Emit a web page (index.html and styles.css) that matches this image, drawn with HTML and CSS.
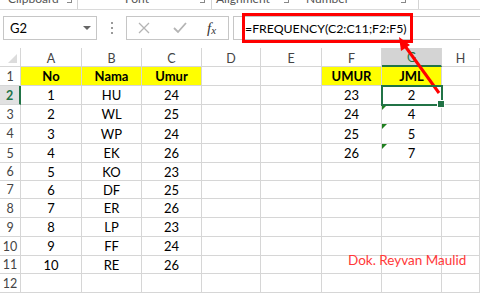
FILE: index.html
```html
<!DOCTYPE html>
<html>
<head>
<meta charset="utf-8">
<link rel="stylesheet" href="styles.css">
</head>
<body>
<div class="page">
  <div class="ribbon">
    <div class="grp g1"><span class="glabel">Clipboard</span><span class="launch"></span></div>
    <div class="grp g2"><span class="glabel">Font</span><span class="launch"></span></div>
    <div class="grp g3"><span class="glabel">Alignment</span><span class="launch"></span></div>
    <div class="grp g4"><span class="glabel">Number</span><span class="launch"></span></div>
  </div>
  <div class="fbar">
    <div class="namebox"><span>G2</span><span class="ddarrow"></span></div>
    <div class="dots"><i></i><i></i><i></i></div>
    <div class="btns">
      <span class="btn x">
        <svg width="12" height="12" viewBox="0 0 12 12"><path d="M1 1L11 11M11 1L1 11" stroke="#b4b4b4" stroke-width="1.3" fill="none"/></svg>
      </span>
      <span class="btn ok">
        <svg width="14" height="12" viewBox="0 0 14 12"><path d="M1 6L5 10L13 1" stroke="#b4b4b4" stroke-width="1.8" fill="none"/></svg>
      </span>
      <span class="btn fx"><i>f</i><i class="sub">x</i></span>
    </div>
    <div class="finput">
      <span class="ftext">=FREQUENCY(C2:C11;F2:F5)</span>
      <div class="redbox"></div>
    </div>
  </div>
  <div class="sheet">
    <div class="corner"><span class="tri"></span></div>
    <div class="ch">A</div><div class="ch">B</div><div class="ch">C</div><div class="ch">D</div><div class="ch">E</div><div class="ch">F</div><div class="ch sel">G</div><div class="ch">H</div>

    <div class="rh">1</div><div class="c y b">No</div><div class="c y b">Nama</div><div class="c y b">Umur</div><div class="c"></div><div class="c"></div><div class="c y b">UMUR</div><div class="c y b">JML</div><div class="c"></div>
    <div class="rh sel">2</div><div class="c">1</div><div class="c">HU</div><div class="c">24</div><div class="c"></div><div class="c"></div><div class="c">23</div><div class="c active">2</div><div class="c"></div>
    <div class="rh">3</div><div class="c">2</div><div class="c">WL</div><div class="c">25</div><div class="c"></div><div class="c"></div><div class="c">24</div><div class="c err">4</div><div class="c"></div>
    <div class="rh">4</div><div class="c">3</div><div class="c">WP</div><div class="c">24</div><div class="c"></div><div class="c"></div><div class="c">25</div><div class="c err">5</div><div class="c"></div>
    <div class="rh">5</div><div class="c">4</div><div class="c">EK</div><div class="c">26</div><div class="c"></div><div class="c"></div><div class="c">26</div><div class="c err">7</div><div class="c"></div>
    <div class="rh">6</div><div class="c">5</div><div class="c">KO</div><div class="c">23</div><div class="c"></div><div class="c"></div><div class="c"></div><div class="c"></div><div class="c"></div>
    <div class="rh">7</div><div class="c">6</div><div class="c">DF</div><div class="c">25</div><div class="c"></div><div class="c"></div><div class="c"></div><div class="c"></div><div class="c"></div>
    <div class="rh">8</div><div class="c">7</div><div class="c">ER</div><div class="c">26</div><div class="c"></div><div class="c"></div><div class="c"></div><div class="c"></div><div class="c"></div>
    <div class="rh">9</div><div class="c">8</div><div class="c">LP</div><div class="c">23</div><div class="c"></div><div class="c"></div><div class="c"></div><div class="c"></div><div class="c"></div>
    <div class="rh">10</div><div class="c">9</div><div class="c">FF</div><div class="c">24</div><div class="c"></div><div class="c"></div><div class="c"></div><div class="c"></div><div class="c"></div>
    <div class="rh">11</div><div class="c">10</div><div class="c">RE</div><div class="c">26</div><div class="c"></div><div class="c"></div><div class="c"></div><div class="c"></div><div class="c"></div>
    <div class="rh">12</div><div class="c"></div><div class="c"></div><div class="c"></div><div class="c"></div><div class="c"></div><div class="c"></div><div class="c"></div><div class="c"></div>
  </div>
  <div class="watermark">Dok. Reyvan Maulid</div>
  <svg class="arrow" width="480" height="294" viewBox="0 0 480 294">
    <line x1="439" y1="93" x2="405" y2="46" stroke="#ff0000" stroke-width="3"/>
    <polygon points="399,37 410,45 401,51" fill="#ff0000"/>
  </svg>
</div>
</body>
</html>
```
FILE: styles.css
```css
* { box-sizing: border-box; }
html, body { margin: 0; padding: 0; background: #fff; }
body { font-family: Lato, "Liberation Sans", sans-serif; color: #000; }
.page { position: relative; width: 480px; height: 294px; overflow: hidden; background: #fff; }

.ribbon { height: 10px; display: flex; border-bottom: 1px solid #dadada; overflow: hidden; }
.grp { position: relative; height: 9px; border-right: 1px solid #d4d4d4; overflow: hidden; }
.g1 { width: 78px; }
.g2 { width: 134px; }
.g3 { width: 82px; border-right: none; }
.g4 { width: 125px; }
.glabel { position: absolute; top: -7px; font-size: 12px; line-height: 12px; color: #555; }
.g1 .glabel { left: 8px; }
.g2 .glabel { left: 47px; }
.g3 .glabel { left: 4px; }
.g4 .glabel { left: 12px; }
.launch { position: absolute; top: -2px; width: 5px; height: 5px; border-right: 1px solid #888; border-bottom: 1px solid #888; }
.g1 .launch { left: 67px; }
.g2 .launch { left: 122px; }
.g3 .launch { left: 72px; }
.g4 .launch { left: 107px; }

.fbar { display: flex; align-items: center; height: 24px; margin-top: 6px; }
.namebox { margin-left: 3px; width: 94px; height: 24px; border: 1px solid #c6c6c6; display: flex; align-items: center; justify-content: space-between; padding: 0 5px 0 6px; font-size: 13px; color: #000; }
.ddarrow { width: 0; height: 0; border-left: 4px solid transparent; border-right: 4px solid transparent; border-top: 4px solid #666; }
.dots { width: 29px; display: flex; flex-direction: column; align-items: center; gap: 3px; }
.dots i { width: 2px; height: 2px; background: #9a9a9a; display: block; }
.btns { width: 103px; height: 24px; border: 1px solid #c6c6c6; display: flex; align-items: center; }
.btn { display: flex; align-items: center; justify-content: center; }
.btn.x { margin-left: 11px; width: 12px; }
.btn.ok { margin-left: 23px; width: 14px; }
.btn.fx { margin-left: 20px; font-family: "Liberation Serif", serif; font-size: 15px; color: #333; }
.btn.fx .sub { font-size: 11px; margin-left: 0px; position: relative; top: 2px; }
.finput { position: relative; margin-left: 4px; flex: 1; height: 24px; border: 1px solid #c6c6c6; border-right: none; display: flex; align-items: center; }
.ftext { margin-left: 11px; font-size: 12.3px; color: #000; white-space: nowrap; }
.redbox { position: absolute; left: 8px; top: -4px; width: 171px; height: 30px; border: 3px solid #ff0000; }

.sheet { margin-top: 8px; display: grid; grid-template-columns: 21px 61px 60px 60px 59px 61px 60px 60px 38px; grid-template-rows: 19px 19px 19px 19px 20px 19px 18px 18px 19px 19px 19px 18px 19px; font-size: 13px; }
.sheet > div { border-right: 1px solid #d6d6d6; border-bottom: 1px solid #d6d6d6; display: flex; align-items: center; justify-content: center; }
.corner { position: relative; border-right-color: #d0d0d0; }
.tri { position: absolute; right: 3px; bottom: 3px; width: 0; height: 0; border-left: 9px solid transparent; border-bottom: 9px solid #dcdcdc; }
.ch { color: #444; font-size: 12.5px; padding-top: 2px; }
.ch.sel { background: #d4d4d4; color: #217346; border-bottom: 2px solid #217346 !important; }
.rh { color: #444; font-size: 12.5px; }
.rh.sel { background: #e1e1e1; color: #217346; font-weight: bold; border-right: 2px solid #217346 !important; }
.c { position: relative; }
.c.y { background: #ffff00; }
.c.b { font-weight: bold; }
.c.active { outline: 2px solid #217346; outline-offset: -1px; z-index: 1; }
.c.active::after { content: ""; position: absolute; right: -4px; bottom: -4px; width: 6px; height: 6px; background: #217346; border: 1px solid #fff; }
.c.err::before { content: ""; position: absolute; left: 0; top: 0; width: 0; height: 0; border-top: 5px solid #208020; border-right: 5px solid transparent; }

.watermark { position: absolute; left: 348px; top: 252px; font-size: 13.5px; color: #ff3838; white-space: nowrap; }
.arrow { position: absolute; left: 0; top: 0; pointer-events: none; }
```
